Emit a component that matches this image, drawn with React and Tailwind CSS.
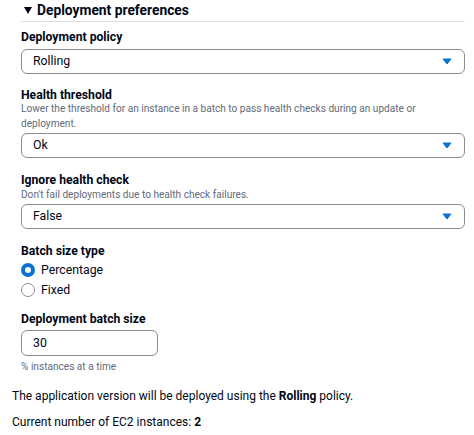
import React from "react";

function Caret() {
  return (
    <svg width="10" height="7" viewBox="0 0 10 7" className="shrink-0">
      <path d="M1 1h8L5 6z" fill="#0972d3" stroke="#0972d3" strokeWidth="1" strokeLinejoin="round" />
    </svg>
  );
}

function Select({ value }) {
  return (
    <div className="flex h-[25px] items-center justify-between rounded-[6px] border border-[#8c8c94] bg-white pl-[11px] pr-[12px] text-[12.3px] text-[#000716]">
      <span>{value}</span>
      <Caret />
    </div>
  );
}

function Label({ children }) {
  return <div className="text-[12.2px] font-bold leading-[14px] text-[#000716]">{children}</div>;
}

function Desc({ children, className = "" }) {
  return <div className={"text-[10.1px] leading-[15px] text-[#5f6b7a] " + className}>{children}</div>;
}

function Radio({ checked, label }) {
  return (
    <div className="flex h-[20px] items-center gap-[6px]">
      {checked ? (
        <span className="box-border h-[14px] w-[14px] rounded-full border-[4px] border-[#0972d3] bg-white" />
      ) : (
        <span className="box-border h-[14px] w-[14px] rounded-full border border-[#8c8c94] bg-white" />
      )}
      <span className="text-[12.3px] text-[#000716]">{label}</span>
    </div>
  );
}

export default function App() {
  return (
    <div
      className="w-[474px] h-[435px] bg-white text-[#000716] overflow-hidden"
      style={{ fontFamily: 'Roboto, "Open Sans", sans-serif' }}
    >
      <div className="pl-[21px] pr-[9px]">
        <div className="flex items-center gap-[5px] h-[22px] pl-[3px] border-b border-[#e0e0e6]">
          <svg width="8" height="7" viewBox="0 0 8 7">
            <path d="M0 0h8L4 7z" fill="#000716" />
          </svg>
          <span className="text-[13.8px] font-bold leading-none">Deployment preferences</span>
        </div>

        <div className="pt-[8px]">
          <Label>Deployment policy</Label>
          <div className="mt-[5px]"><Select value="Rolling" /></div>
        </div>

        <div className="pt-[14px]">
          <Label>Health threshold</Label>
          <Desc className="-mt-[1.5px]">
            Lower the threshold for an instance in a batch to pass health checks during an update or deployment.
          </Desc>
          <div className="mt-[2.5px]"><Select value="Ok" /></div>
        </div>

        <div className="pt-[15px]">
          <Label>Ignore health check</Label>
          <Desc>Don't fail deployments due to health check failures.</Desc>
          <div className="mt-[2px]"><Select value="False" /></div>
        </div>

        <div className="pt-[15px]">
          <Label>Batch size type</Label>
          <div className="mt-[2px]">
            <Radio checked label="Percentage" />
            <Radio label="Fixed" />
          </div>
        </div>

        <div className="pt-[12px]">
          <Label>Deployment batch size</Label>
          <div className="mt-[4px] flex h-[26px] w-[137px] items-center rounded-[6px] border border-[#8c8c94] pl-[11px] text-[12.3px]">30</div>
          <div className="mt-[3px]"><Desc>% instances at a time</Desc></div>
        </div>
      </div>

      <div className="pl-[12px] pt-[13px] text-[12px] leading-[18px]">
        The application version will be deployed using the <b>Rolling</b> policy.
      </div>
      <div className="pl-[12px] pt-[8px] text-[12px] leading-[18px]">
        Current number of EC2 instances: <b>2</b>
      </div>
    </div>
  );
}
